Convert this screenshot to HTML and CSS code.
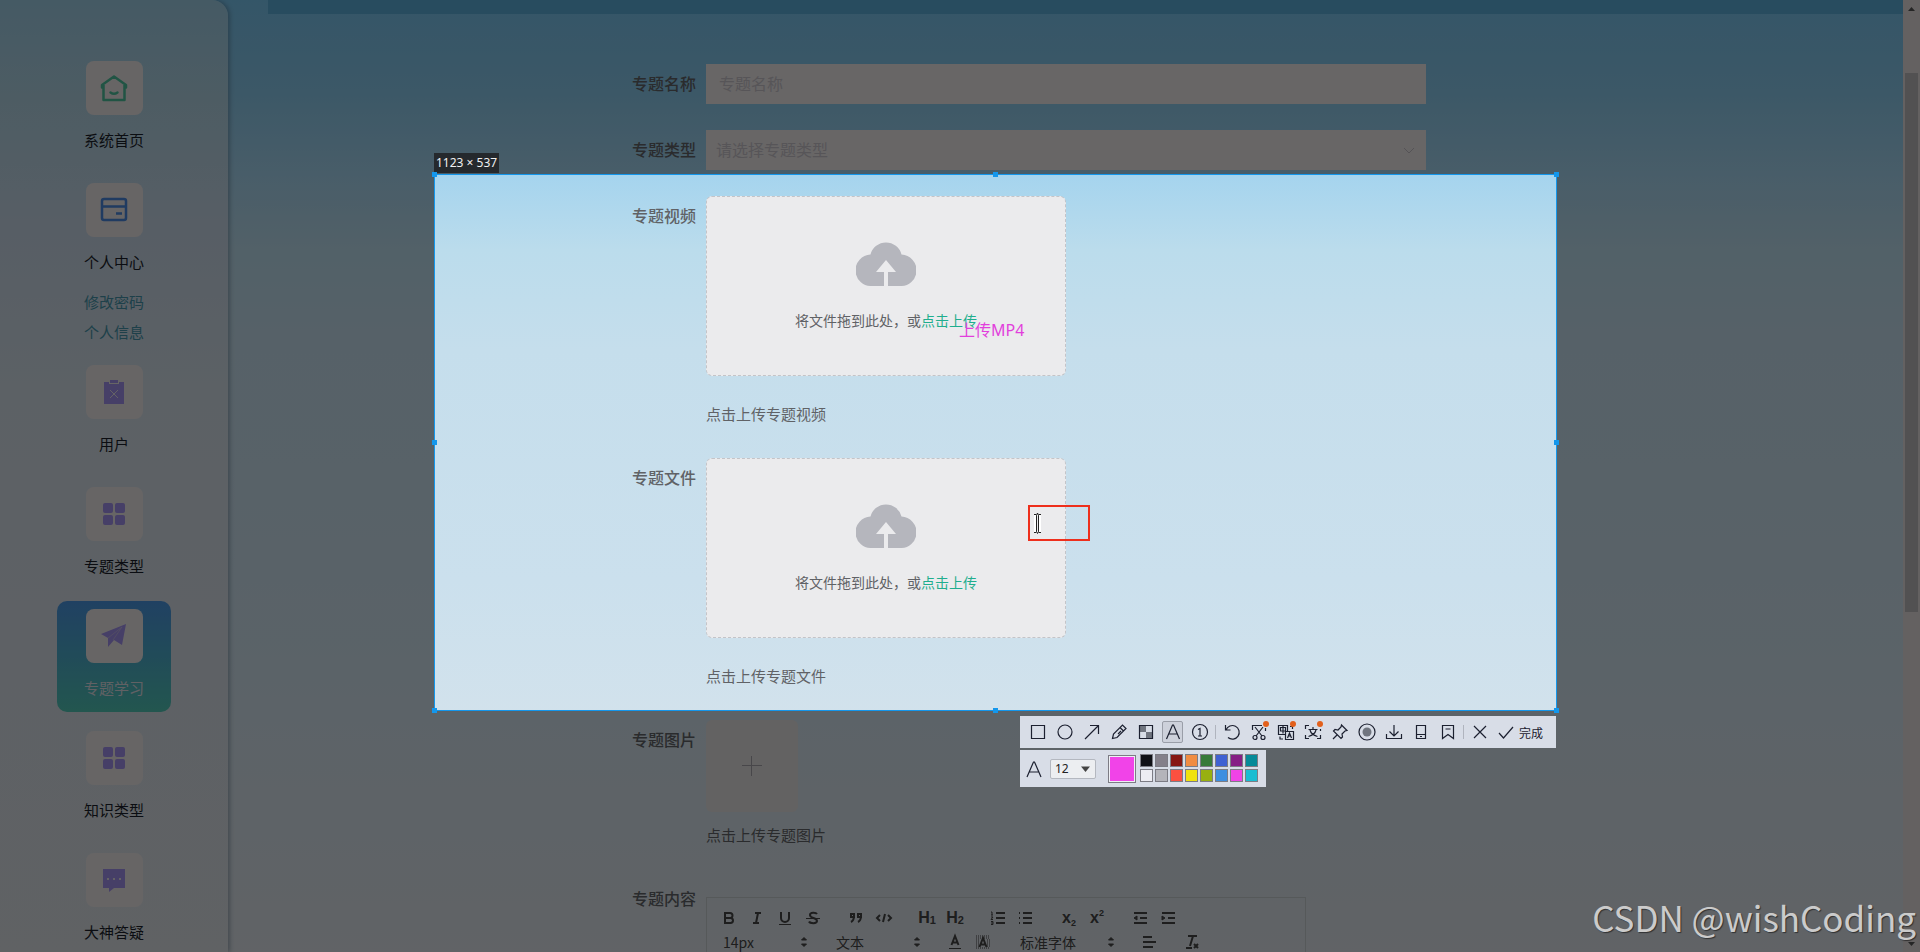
FILE: index.html
```html
<!DOCTYPE html>
<html lang="zh-CN">
<head>
<meta charset="utf-8">
<title>专题学习</title>
<link rel="stylesheet" href="styles.css">
</head>
<body>
<div class="page">
  <nav class="sidebar">
    <a class="item" href="#"><span class="tile green"><svg width="28" height="28" viewBox="0 0 28 28" fill="none" stroke="currentColor" stroke-width="2.500" stroke-linejoin="round" stroke-linecap="round"><path d="M2 13.500V11L14 2.500 26 11v2.500M3.500 11v15h21V11M10.500 18.500q3.500 2.500 7 0"/></svg></span><span class="name">系统首页</span></a>
    <a class="item" href="#"><span class="tile blue"><svg width="28" height="28" viewBox="0 0 28 28" fill="none" stroke="currentColor" stroke-width="2.500"><rect x="2" y="3" width="24" height="21" rx="2"/><path d="M2 10.500h24M16 17.500h6"/></svg></span><span class="name">个人中心</span></a>
    <div class="sub"><a href="#">修改密码</a><a href="#">个人信息</a></div>
    <a class="item" href="#"><span class="tile"><svg width="28" height="28" viewBox="0 0 28 28"><path fill="currentColor" d="M4 4h5v2h10V4h5v22H4zM10 2h8v3h-8z"/><path d="M10 12l8 8M18 12l-8 8" stroke="#e4dfe6" stroke-width="1"/></svg></span><span class="name">用户</span></a>
    <a class="item" href="#"><span class="tile"><svg width="28" height="28" viewBox="0 0 28 28" fill="currentColor"><rect x="3" y="3" width="10" height="10" rx="2"/><rect x="15" y="3" width="10" height="10" rx="2"/><rect x="3" y="15" width="10" height="10" rx="2"/><rect x="15" y="15" width="10" height="10" rx="2"/></svg></span><span class="name">专题类型</span></a>
    <a class="item active" href="#"><span class="tile"><svg width="28" height="28" viewBox="0 0 28 28" fill="currentColor"><path d="M1 12 26 2l-4 21-8-5-6 7V16z"/><path d="M8 16l14-11-9 13" fill="none" stroke="#c9c3dc" stroke-width=".6"/></svg></span><span class="name">专题学习</span></a>
    <a class="item" href="#"><span class="tile"><svg width="28" height="28" viewBox="0 0 28 28" fill="currentColor"><rect x="3" y="3" width="10" height="10" rx="2"/><rect x="15" y="3" width="10" height="10" rx="2"/><rect x="3" y="15" width="10" height="10" rx="2"/><rect x="15" y="15" width="10" height="10" rx="2"/></svg></span><span class="name">知识类型</span></a>
    <a class="item" href="#"><span class="tile"><svg width="28" height="28" viewBox="0 0 28 28"><path fill="currentColor" d="M3 3h22v19H14l-5 4v-4H3z"/><path stroke="#e4dfe6" stroke-width="2" d="M7 13h2M13 13h2M19 13h2"/></svg></span><span class="name">大神答疑</span></a>
  </nav>

  <main class="main">
    <div class="topbar"></div>
    <form class="form">
      <div class="row"><label class="label" for="name">专题名称</label><div class="field wide"><input class="box" id="name" type="text" placeholder="专题名称"></div></div>
      <div class="row"><label class="label" for="kind">专题类型</label><div class="field wide"><select class="box kind" id="kind"><option>请选择专题类型</option></select><svg class="chevron" width="12" height="12" viewBox="0 0 12 12" fill="none" stroke="#c2bec4"><path d="M1 3l5 5 5-5"/></svg></div></div>
      <div class="row"><span class="label">专题视频</span><div class="field">
        <div class="drop"><svg class="cloud" width="60" height="45" viewBox="0 0 60 45"><path fill="#b5b6bd" d="M28 45H16A15.700 15.700 0 0 1 14.500 13.500a16 16 0 0 1 31 0A15.700 15.700 0 0 1 44 45H32V31h8L30 19 20 31h8z"/></svg><span>将文件拖到此处，或<a href="#">点击上传</a></span></div>
        <p class="tip">点击上传专题视频</p></div></div>
      <div class="row"><span class="label">专题文件</span><div class="field">
        <div class="drop"><svg class="cloud" width="60" height="45" viewBox="0 0 60 45"><path fill="#b5b6bd" d="M28 45H16A15.700 15.700 0 0 1 14.500 13.500a16 16 0 0 1 31 0A15.700 15.700 0 0 1 44 45H32V31h8L30 19 20 31h8z"/></svg><span>将文件拖到此处，或<a href="#">点击上传</a></span></div>
        <p class="tip">点击上传专题文件</p></div></div>
      <div class="row"><span class="label">专题图片</span><div class="field">
        <button class="add" type="button" aria-label="添加图片"><svg width="20" height="20" viewBox="0 0 20 20" stroke="#a5a3a8" stroke-width="1"><path d="M0 9.500h20M9.500 0v20"/></svg></button>
        <p class="tip near">点击上传专题图片</p></div></div>
      <div class="row"><span class="label">专题内容</span>
        <div class="editor">
          <div class="tools">
            <div class="group">
              <button type="button" aria-label="粗体"><svg viewBox="0 0 18 18"><path d="M5 4h5a2.500 2.500 0 0 1 0 5H5zM5 9h5.500a2.500 2.500 0 0 1 0 5H5z"/></svg></button>
              <button type="button" aria-label="斜体"><svg viewBox="0 0 18 18"><path d="M7 4h6M5 14h6M8 14l2-10"/></svg></button>
              <button type="button" aria-label="下划线"><svg viewBox="0 0 18 18"><path d="M5 3v6a4 4 0 0 0 8 0V3"/><path class="thin" d="M3 15.500h12"/></svg></button>
              <button type="button" aria-label="删除线"><svg viewBox="0 0 18 18"><path d="M13 5c-1-1.500-7-2-7 1 0 4 7 2 7 6 0 3-7 2.500-8 .5"/><path class="thin" d="M2 9.500h14"/></svg></button>
            </div>
            <div class="group">
              <button type="button" aria-label="引用"><svg viewBox="0 0 18 18"><path d="M4 5h3v3H4zM11 5h3v3h-3zM7 7c0 4-1 5-3 6M14 7c0 4-1 5-3 6"/></svg></button>
              <button type="button" aria-label="代码"><svg viewBox="0 0 18 18"><path d="M5 6 2 9l3 3M13 6l3 3-3 3M10 5l-2 8"/></svg></button>
            </div>
            <div class="group">
              <button type="button" class="glyph">H<small>1</small></button>
              <button type="button" class="glyph">H<small>2</small></button>
            </div>
            <div class="group">
              <button type="button" aria-label="有序列表"><svg viewBox="0 0 18 18"><path d="M7 4h9M7 9h9M7 14h9"/><path class="thin" d="M2 3h1v3M2 6h2M2 8h2l-2 2.500h2M2 12.500h2v3H2M2 14h2"/></svg></button>
              <button type="button" aria-label="无序列表"><svg viewBox="0 0 18 18"><path d="M6 4h9M6 9h9M6 14h9M2 4h1M2 9h1M2 14h1"/></svg></button>
            </div>
            <div class="group">
              <button type="button" class="glyph">x<sub>2</sub></button>
              <button type="button" class="glyph">x<sup>2</sup></button>
            </div>
            <div class="group">
              <button type="button" aria-label="减少缩进"><svg viewBox="0 0 18 18"><path d="M3 4h13M9 9h7M3 14h13"/><path class="solid" d="M6 7v4L3 9z"/></svg></button>
              <button type="button" aria-label="增加缩进"><svg viewBox="0 0 18 18"><path d="M3 4h13M9 9h7M3 14h13"/><path class="solid" d="M3 7v4l3-2z"/></svg></button>
            </div>
          </div>
          <div class="tools">
            <div class="group pick"><select aria-label="字号"><option>14px</option></select><svg viewBox="0 0 18 18"><path class="solid" d="M6.500 7 9 4.500 11.500 7zM6.500 11 9 13.500l2.500-2.500z"/></svg></div>
            <div class="group pick"><select aria-label="标题"><option>文本</option></select><svg viewBox="0 0 18 18"><path class="solid" d="M6.500 7 9 4.500 11.500 7zM6.500 11 9 13.500l2.500-2.500z"/></svg></div>
            <div class="group">
              <button type="button" aria-label="文字颜色"><svg viewBox="0 0 18 18"><path d="M5.500 12 9 3l3.500 9M6.500 9.500h5"/><path class="thin" d="M3 15.500h12"/></svg></button>
              <button type="button" aria-label="背景颜色"><svg viewBox="0 0 18 18"><path class="hatch" d="M2 3h14M2 5h14M2 7h3M13 7h3M2 9h3M13 9h3M2 11h3M13 11h3M2 13h3M13 13h3M2 15h14"/><path d="M5.500 14 9 5l3.500 9M6.500 11.500h5"/></svg></button>
            </div>
            <div class="group pick big"><select aria-label="字体"><option>标准字体</option></select><svg viewBox="0 0 18 18"><path class="solid" d="M6.500 7 9 4.500 11.500 7zM6.500 11 9 13.500l2.500-2.500z"/></svg></div>
            <div class="group"><button type="button" aria-label="对齐"><svg viewBox="0 0 18 18"><path d="M3 4h9M3 9h13M3 14h10"/></svg></button></div>
            <div class="group"><button type="button" aria-label="清除格式"><svg viewBox="0 0 18 18"><path d="M5 3h9M10 3 7 13M3 15h6M11 11l4 4M15 11l-4 4"/></svg></button></div>
          </div>
        </div>
      </div>
    </form>
  </main>
  <div class="scroll"><svg width="17" height="17" viewBox="0 0 17 17"><path d="M5 11l3.500-4 3.500 4z" fill="#555"/></svg><span class="thumb"></span><svg class="down" width="17" height="17" viewBox="0 0 17 17"><path d="M5 7l3.500 4L12 7z" fill="#555"/></svg></div>
</div>

<div class="capture">
  <span class="size">1123 × 537</span>
  <i class="grip nw"></i><i class="grip n"></i><i class="grip ne"></i><i class="grip w"></i><i class="grip e"></i><i class="grip sw"></i><i class="grip s"></i><i class="grip se"></i>
  <span class="note">上传MP4</span>
  <div class="mark"><svg width="7" height="21" viewBox="0 0 7 21" fill="#fff" stroke="#222"><path d="M0 1.500h2l.5 1v16l-.5 1H0M7 1.500H5l-.5 1v16l.5 1h2M2.500 2.500 3.500 0l1 2.500M2.500 18.500l1 2 1-2"/></svg></div>
  <div class="panels">
    <div class="bar">
      <button aria-label="矩形"><svg viewBox="0 0 20 20"><path d="M3.500 3.500h13v13h-13z"/></svg></button>
      <button aria-label="椭圆"><svg viewBox="0 0 20 20"><circle cx="10" cy="10" r="7"/></svg></button>
      <button aria-label="箭头"><svg viewBox="0 0 20 20"><path d="M3 17 16.500 3.500M8 3.500h8.500V12"/></svg></button>
      <button aria-label="画笔"><svg viewBox="0 0 20 20"><path d="M3.500 16.500l1-4.500 9-9 3.500 3.500-9 9zM11 5.500 14.500 9M9 12l3-3"/></svg></button>
      <button aria-label="马赛克"><svg viewBox="0 0 20 20"><path fill="#70757f" stroke="none" d="M4 4h6v6H4zM10 10h6v6h-6z"/><path d="M3.500 3.500h13v13h-13z"/></svg></button>
      <button class="on" aria-label="文字"><svg viewBox="0 0 20 20"><path d="M3.500 17 9.500 3h1l6 14M6 12h8"/></svg></button>
      <button aria-label="序号"><svg viewBox="0 0 20 20"><circle cx="10" cy="10" r="7.500"/><path d="M8 7.500l2-1V14M8 14h4"/></svg></button>
      <i class="sep"></i>
      <button aria-label="撤销"><svg viewBox="0 0 20 20"><path d="M3.500 3v5h5M4 8a6.800 6.800 0 1 1 2 7.500"/></svg></button>
      <button class="hot" aria-label="裁剪"><svg viewBox="0 0 20 20"><path d="M3.500 8V3.500H13M16.500 6v3M6 5l7 9M14 5l-7 9"/><circle cx="6" cy="15.500" r="2"/><circle cx="14" cy="15.500" r="2"/></svg></button>
      <button class="hot" aria-label="翻译"><svg viewBox="0 0 20 20"><path d="M9 12.500H2.500v-9h9V9M4.500 5.500h5v3.500h-5zM7 4v7.500M9.500 9.500h8v8h-8zM11.500 16l2-5 2 5M12.300 14h2.400M4 14.500v2.500h3M14 4.500h2.500V7"/></svg></button>
      <button class="hot" aria-label="识字"><svg viewBox="0 0 20 20"><path d="M6 3.500H2.500V7M2.500 13v3.500H6M14 16.500h3.500V13M17.500 7v2M5.500 7.500h9M10 5v2.500M7 8c1 4 4 5.500 7.500 6.500M13 8c-1 4-4 5.500-7.500 6.500"/></svg></button>
      <button aria-label="固定"><svg viewBox="0 0 20 20"><path d="M11.500 3 17 8.500l-2 .5-3 3 .5 3L11 16.500 3.500 9 5 7.500l3 .5 3-3zM7 13l-4 4"/></svg></button>
      <button aria-label="录制"><svg viewBox="0 0 20 20"><circle cx="10" cy="10" r="8"/><circle cx="10" cy="10" r="4.500" fill="#70757f" stroke="none"/></svg></button>
      <button aria-label="下载"><svg viewBox="0 0 20 20"><path d="M10 3v11M5.500 9.500 10 14l4.500-4.500M2.500 12v4.500h15V12"/></svg></button>
      <button aria-label="手机"><svg viewBox="0 0 20 20"><path d="M5.500 3.500h9v13h-9zM5.500 12.500h9M9 14.500h2"/></svg></button>
      <button aria-label="收藏"><svg viewBox="0 0 20 20"><path d="M4.500 3.500h11v13L10 12.500l-5.500 4zM7.500 7h5"/></svg></button>
      <i class="sep"></i>
      <button aria-label="关闭"><svg viewBox="0 0 20 20"><path d="M4 4l12 12M16 4 4 16"/></svg></button>
      <button class="done"><svg viewBox="0 0 20 20"><path d="M3 11l4.500 5L17 5"/></svg>完成</button>
    </div>
    <div class="bar second">
      <svg viewBox="0 0 20 20"><path d="M3 18 9.500 3h1L17 18M5.500 13h9"/></svg>
      <span class="sizepick"><select aria-label="字号"><option>12</option></select><svg viewBox="0 0 20 20"><path d="M6 7.500h9L10.500 13z" fill="#444" stroke="none"/></svg></span>
      <button class="chip current" aria-label="当前颜色"></button>
      <div class="chips">
        <button class="chip c1" aria-label="黑"></button><button class="chip c2" aria-label="灰"></button><button class="chip c3" aria-label="深红"></button><button class="chip c4" aria-label="橙"></button><button class="chip c5" aria-label="绿"></button><button class="chip c6" aria-label="蓝"></button><button class="chip c7" aria-label="紫"></button><button class="chip c8" aria-label="青"></button>
        <button class="chip c9" aria-label="白"></button><button class="chip c10" aria-label="浅灰"></button><button class="chip c11" aria-label="红"></button><button class="chip c12" aria-label="黄"></button><button class="chip c13" aria-label="草绿"></button><button class="chip c14" aria-label="天蓝"></button><button class="chip c15" aria-label="粉"></button><button class="chip c16" aria-label="浅青"></button>
      </div>
    </div>
  </div>
</div>
<div class="watermark">CSDN @wishCoding</div>
</body>
</html>
```
FILE: styles.css
```css
* { box-sizing: border-box; }
body {
  margin: 0;
  height: 100vh;
  overflow: hidden;
  position: relative;
  font-family: "Noto Sans CJK SC", "Liberation Sans", sans-serif;
}
button, select, input { font-family: inherit; margin: 0; padding: 0; border: 0; background: none; }
a { text-decoration: none; }

.page {
  display: flex;
  height: 100%;
  overflow: hidden;
  background: linear-gradient(#78c3ec 0, #88c8ea 90px, #a5d4ee 175px, #bbdcec 250px, #c5deec 350px, #cbe0ed 580px, #d2e2ec 720px, #dce2e8 100%);
}

/* sidebar */
.sidebar {
  width: 228px;
  flex: none;
  padding-top: 53px;
  display: flex;
  flex-direction: column;
  align-items: center;
  border-radius: 0 16px 0 0;
  background: linear-gradient(#9dcde4 0, #b0d2e2 100px, #c6d6e6 220px, #d2dde6 400px, #dadfe4 100%);
  box-shadow: 2px 0 4px rgba(60, 80, 100, .4);
}
.item {
  width: 114px;
  flex: none;
  margin-bottom: 11px;
  padding: 8px 0 9px;
  border-radius: 10px;
  display: flex;
  flex-direction: column;
  align-items: center;
  color: #1b1f2b;
  font-size: 15px;
}
.tile {
  width: 57px;
  height: 54px;
  border-radius: 8px;
  background: #ebe6e6;
  color: #a08fea;
  display: flex;
  align-items: center;
  justify-content: center;
}
.tile.green { color: #4cc09c; }
.tile.blue { color: #4a86dc; }
.name { margin-top: 10px; line-height: 30px; }
.active { background: linear-gradient(#4a94e0, #50c4b4); color: #dcdce4; }
.sub { margin-top: -10px; margin-bottom: 10px; }
.sub a { display: block; line-height: 30px; font-size: 15px; color: #4593a8; }

/* form */
.main { flex: 1; margin-left: 40px; min-width: 0; }
.topbar { height: 14px; background: #5badd8; }
.form { margin-top: 50px; padding-left: 308px; }
.row { display: flex; gap: 10px; margin-bottom: 26px; }
.label {
  width: 120px;
  flex: none;
  text-align: right;
  font-size: 16px;
  font-weight: 500;
  line-height: 38px;
  color: #606266;
}
.field { position: relative; }
.wide { width: 720px; }
.box {
  display: block;
  width: 100%;
  height: 40px;
  padding: 0 13px 2px;
  font-size: 16px;
  color: #c6c2c8;
  background: #ece8e8;
  border-radius: 0;
  appearance: none;
}
.box::placeholder { color: #c6c2c8; opacity: 1; }
.kind { padding: 0 10px 2px; }
.chevron { position: absolute; right: 11px; top: 15px; }
.drop {
  width: 360px;
  height: 180px;
  padding-top: 44px;
  border: 1px dashed #c4c4c8;
  border-radius: 6px;
  background: #ebebed;
  display: flex;
  flex-direction: column;
  align-items: center;
  font-size: 14px;
  line-height: 20px;
  color: #606266;
}
.drop a { color: #1fae8e; }
.cloud { margin-bottom: 24px; }
.tip { margin: 20px 0 1px; font-size: 15px; line-height: 35px; color: #606266; }
.tip.near { margin-top: 5px; }
.add {
  width: 92px;
  height: 92px;
  background: #e2dfdf;
  border-radius: 6px;
  display: flex;
  align-items: center;
  justify-content: center;
}

/* rich text toolbar */
.editor {
  width: 600px;
  height: 200px;
  margin-top: 18px;
  padding: 8px;
  border: 1px solid #c4cace;
}
.tools { display: flex; gap: 15px; height: 24px; }
.group { display: flex; align-items: center; }
.tools button {
  width: 28px;
  height: 24px;
  display: flex;
  align-items: center;
  justify-content: center;
}
.tools svg { width: 18px; height: 18px; fill: none; stroke: #444; stroke-width: 2; }
.tools .thin { stroke-width: 1; }
.tools .hatch { stroke-width: 1; stroke-dasharray: 1 1; }
.tools .solid { fill: #444; stroke-width: 1; }
.tools .glyph { font: bold 16px "Liberation Sans", sans-serif; color: #444; }
.glyph small { font-size: 11px; padding-top: 3px; }
.glyph sub, .glyph sup { font-size: 9px; line-height: 9px; }
.glyph sub { padding-top: 10px; }
.glyph sup { padding-bottom: 9px; }
.pick { width: 98px; padding-left: 8px; }
.pick.big { width: 108px; }
.pick select { flex: 1; min-width: 0; appearance: none; font-size: 14px; color: #444; }

/* page scrollbar */
.scroll { width: 17px; flex: none; background: #e4dede; display: flex; flex-direction: column; align-items: center; }
.thumb { width: 13px; height: 539px; margin-top: 56px; background: #bbb8ba; }
.down { margin-top: auto; }

/* screen capture layer */
.capture {
  position: absolute;
  left: 434px;
  top: 174px;
  width: 1123px;
  height: 537px;
  border: 1px solid #1497ec;
  box-shadow: 0 0 0 2000px rgba(0, 0, 0, .56);
}
.size {
  position: absolute;
  left: -1px;
  top: -22px;
  padding: 0 2px 1px;
  background: #25292d;
  color: #f0f0f0;
  font-family: "Noto Sans", sans-serif;
  font-size: 12px;
  line-height: 19px;
  white-space: nowrap;
}
.grip { position: absolute; width: 5px; height: 5px; background: #1497ec; }
.nw, .n, .ne { top: -3px; }
.sw, .s, .se { bottom: -3px; }
.nw, .w, .sw { left: -3px; }
.ne, .e, .se { right: -3px; }
.n, .s { left: calc(50% - 3px); }
.w, .e { top: calc(50% - 3px); }
.note { position: absolute; left: 524px; top: 143px; font-family: "Noto Sans", "Noto Sans CJK SC", sans-serif; font-size: 16px; line-height: 24px; color: #e23fdc; }
.mark { position: absolute; left: 593px; top: 330px; width: 62px; height: 36px; padding: 6px 4px; border: 2px solid #ee2f1c; }
.mark svg { display: block; }
.panels { position: absolute; right: 0; top: 541px; width: 536px; }
.bar { height: 32px; padding: 0 4px; display: flex; align-items: center; background: #d8dde7; }
.bar button { color: #1c2030; }
.bar svg { width: 20px; height: 20px; flex: none; fill: none; stroke: #1c2030; stroke-width: 1.200; }
.bar > button { position: relative; width: 27px; height: 22px; flex: none; display: flex; align-items: center; justify-content: center; }
.bar > .on { width: 21px; margin: 0 3px; background: #cdd1db; border: 1px solid #9a9ea8; border-radius: 2px; }
.bar > .hot::after { content: ""; position: absolute; right: 3px; top: 0; width: 6px; height: 6px; border-radius: 50%; background: #e2601c; }
.sep { width: 1px; height: 14px; margin: 0 2px; background: #b0b4be; }
.bar > .done { width: auto; gap: 3px; margin-left: 3px; font-size: 12px; }
.bar.second { width: 246px; height: 37px; margin-top: 2px; padding: 0 8px 0 4px; }
.sizepick { width: 46px; height: 20px; margin-left: 6px; display: flex; align-items: center; background: #eceef1; border: 1px solid #b4b8c0; border-radius: 2px; }
.sizepick select { flex: 1; min-width: 0; padding-left: 4px; appearance: none; font-family: "Noto Sans", sans-serif; font-size: 12px; line-height: 18px; color: #222; }
.bar .chip { width: 13px; height: 13px; margin: 0; border: 1px solid #7c7c84; }
.bar .current { width: 28px; height: 28px; margin: 0 4px 0 12px; background: #f143e8; box-shadow: inset 0 0 0 1px #eef0f4; }
.chips { display: grid; grid-template-columns: repeat(8, 13px); gap: 2px; padding-bottom: 1px; }
.c1 { background: #101116; }
.c2 { background: #84808a; }
.c3 { background: #861712; }
.c4 { background: #f08c42; }
.c5 { background: #387a3a; }
.c6 { background: #4061d2; }
.c7 { background: #851f84; }
.c8 { background: #078a98; }
.c9 { background: #ececf2; }
.c10 { background: #b4b4ba; }
.c11 { background: #fb5040; }
.c12 { background: #f0e20c; }
.c13 { background: #98b010; }
.c14 { background: #3d8fe0; }
.c15 { background: #f043e6; }
.c16 { background: #19bdd2; }

.watermark {
  position: absolute;
  right: 4px;
  bottom: 10px;
  font-size: 35px;
  line-height: 50px;
  color: #cbcbcb;
  text-shadow: 1px 1px 1px rgba(0, 0, 0, .5);
}
```
